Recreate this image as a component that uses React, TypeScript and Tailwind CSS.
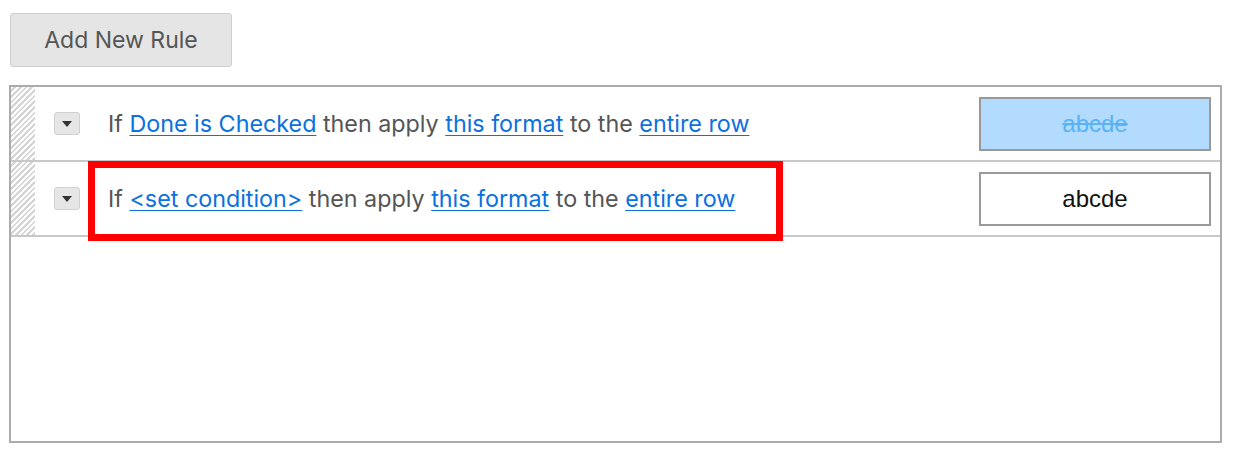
import React from "react";

function Stripe() {
  return (
    <div className="w-[24px] self-stretch bg-[repeating-linear-gradient(135deg,#ffffff_0px,#ffffff_2px,#d4d4d4_2px,#d4d4d4_4px)]" />
  );
}

function Drop() {
  return (
    <div className="ml-[19px] w-[26px] h-[23px] rounded-[3px] border border-[#d0d0d0] bg-[#e6e6e6] flex items-center justify-center">
      <svg width="10" height="6" viewBox="0 0 10 6">
        <path d="M0 0 L10 0 L5 6 Z" fill="#333" />
      </svg>
    </div>
  );
}

function L({ children }: { children: React.ReactNode }) {
  return <span className="text-[#0b70e0] underline underline-offset-[3px] decoration-1">{children}</span>;
}

function Row({ cond, done }: { cond: string; done?: boolean }) {
  return (
    <div className="flex items-center h-[75px] border-b-2 border-[#c8c8c8]">
      <Stripe />
      <Drop />
      <div className="ml-[28px] mt-[1px] text-[23.3px] leading-none text-[#555] whitespace-nowrap">
        If <L>{cond}</L> then apply <L>this format</L> to the <L>entire row</L>
      </div>
      <div
        className={
          "ml-auto mr-[9px] w-[232px] h-[54px] border-2 border-[#999] flex items-center justify-center font-['Liberation_Sans',Arial,sans-serif] text-[24px] " +
          (done ? "bg-[#b3dbfe] text-[#5ab2f7] line-through" : "bg-white text-[#111]")
        }
      >
        abcde
      </div>
    </div>
  );
}

export default function App() {
  return (
    <div className="pl-[9px] pt-[13px] font-['Inter',sans-serif] bg-white w-[1235px] h-[453px]">
      <button className="ml-[1px] w-[222px] h-[54px] rounded-[3px] border border-[#cfcfcf] bg-[#e5e5e5] text-[23px] text-[#555]">
        Add New Rule
      </button>
      <div className="relative mt-[18px] w-[1213px] h-[358px] border-2 border-[#ababab]">
        <Row cond="Done is Checked" done />
        <Row cond="<set condition>" />
        <div className="absolute left-[77px] top-[74px] w-[695px] h-[80px] border-[7px] border-[#ff0000]" />
      </div>
    </div>
  );
}
